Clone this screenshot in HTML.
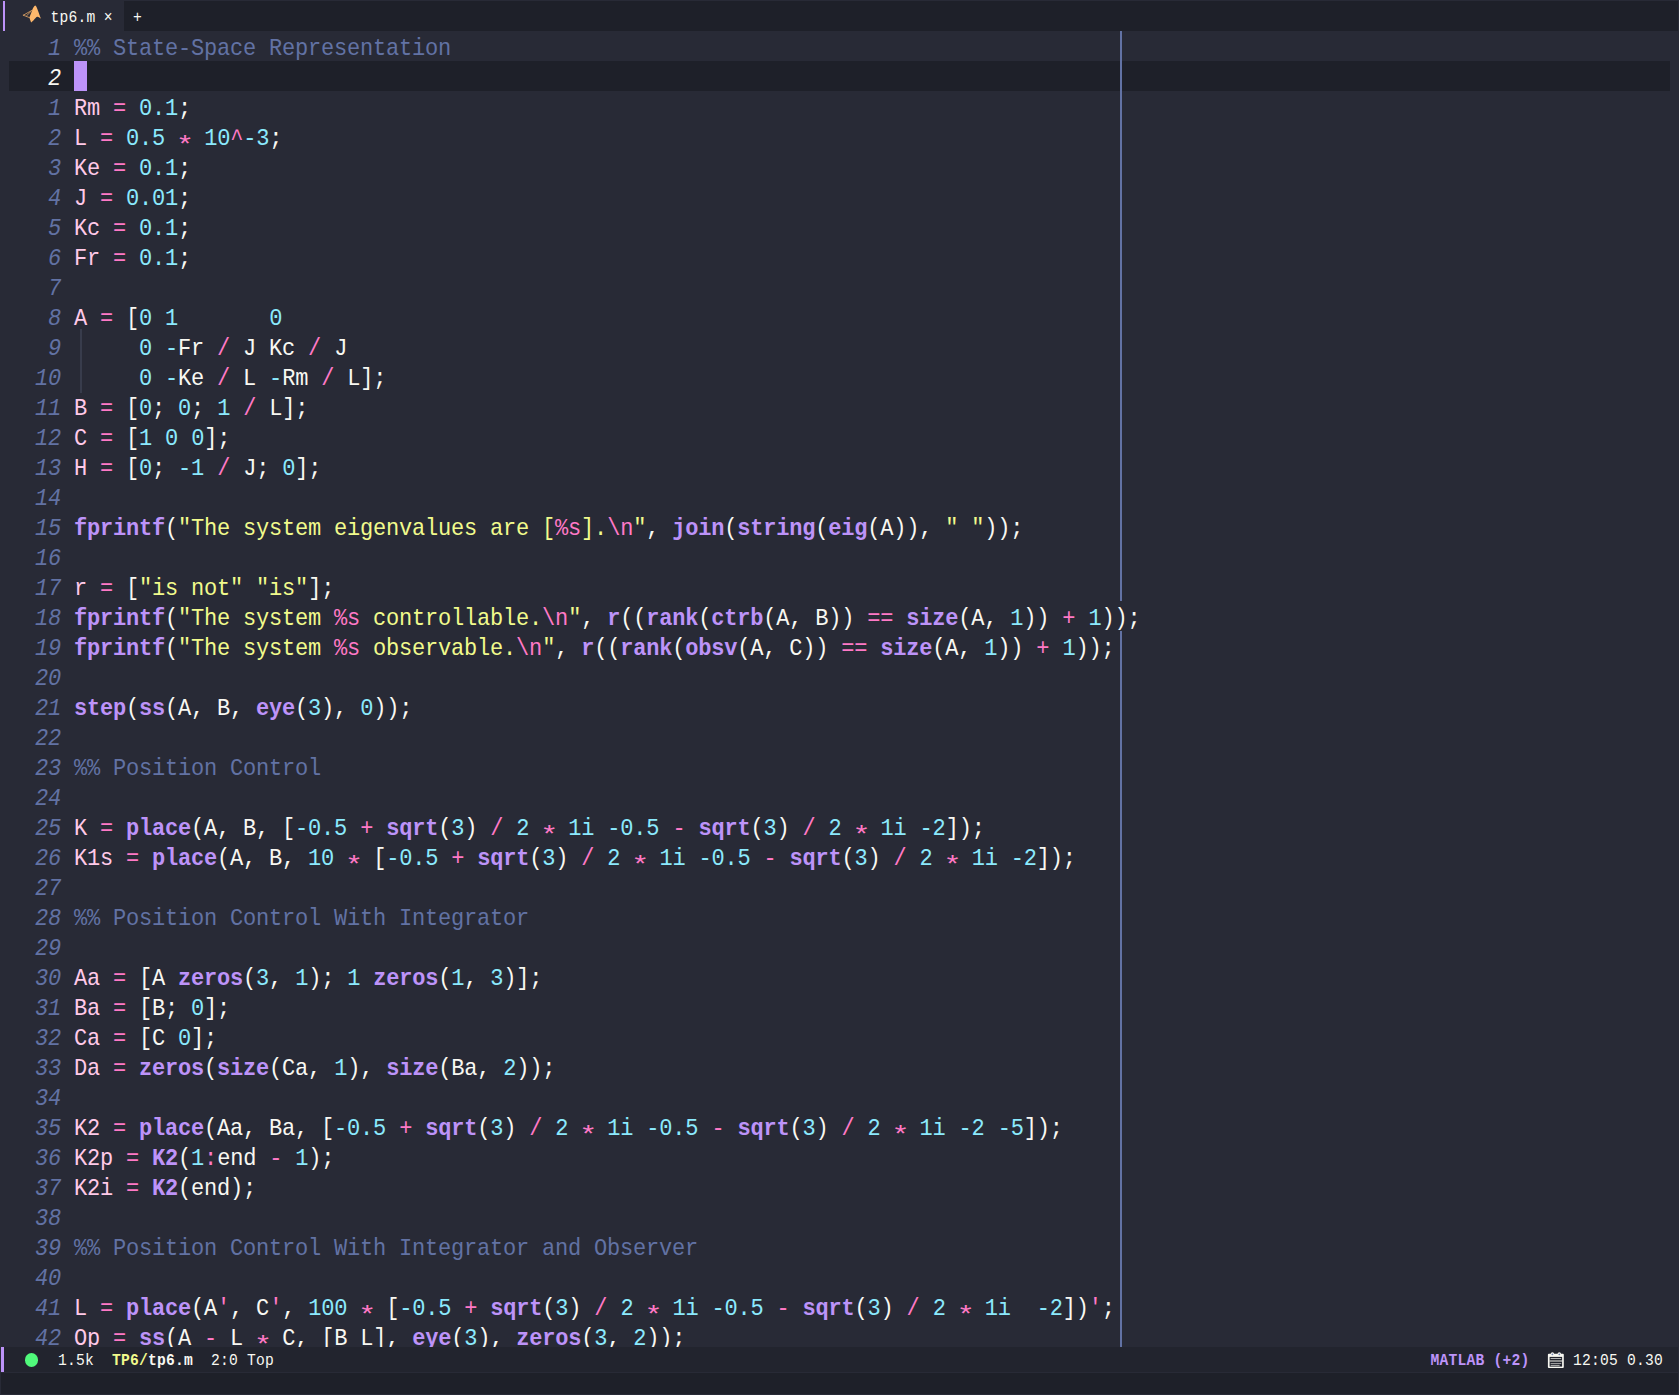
<!DOCTYPE html>
<html><head><meta charset="utf-8"><title>tp6.m</title><style>
html,body{margin:0;padding:0;background:#282a36;}
body{width:1679px;height:1395px;overflow:hidden;position:relative;font-family:"Liberation Mono",monospace;color:#f8f8f2;}
#ed{position:absolute;left:0;top:31px;width:1679px;height:1316px;overflow:hidden;}
.l{position:absolute;left:0;width:1679px;height:30px;line-height:30px;font-size:22.0px;letter-spacing:-0.200px;white-space:pre;transform-origin:0 20.87px;transform:translateY(3.6px) scaleY(1.1);}
.l .g{position:absolute;left:9px;top:0px;width:52px;text-align:right;color:#6272a4;font-style:italic;}
.l .t{position:absolute;left:74px;top:0px;}
#hl{position:absolute;left:9px;top:30px;width:1661px;height:30px;background:#1e2029;}
.l.cur .g{color:#f8f8f2;}
.c{color:#6272a4} .v{color:#ffc9e8} .o{color:#ff79c6} .n{color:#8be9fd}

.a{color:transparent;position:relative}
.a::after{content:"*";position:absolute;left:50%;top:0;width:20px;margin-left:-9.5px;text-align:center;font-size:30px;letter-spacing:0;color:#ff79c6;line-height:30px;height:30px;transform:translateY(4.5px) scaleY(.75);transform-origin:50% 50%;}
.f{color:#bd93f9;font-weight:bold} .s{color:#f1fa8c} .e{color:#ff79c6}
#cursor{position:absolute;left:74px;top:30px;width:13px;height:30px;background:#bd93f9;}
.fc{position:absolute;left:1120px;width:2px;background:#6272a4;}
#ig{position:absolute;left:79.7px;top:298px;width:2.2px;height:64px;background:#383c4c;}
#tabbar{position:absolute;left:1px;top:1px;width:1677px;height:30px;background:#1e2029;}
#tab{position:absolute;left:0;top:0;width:123px;height:30px;background:#282a36;}
#tbar{position:absolute;left:2px;top:0;width:2.4px;height:30px;background:#bd93f9;}
.tt{position:absolute;font-size:14.667px;letter-spacing:0.2px;line-height:30px;top:0;white-space:pre;transform-origin:0 18.91px;transform:translateY(2.2px) scaleY(1.1);}
#ml{position:absolute;left:1px;top:1347px;width:1677px;height:25px;background:#22242e;}
#mlbar{position:absolute;left:0;top:0;width:3px;height:25px;background:#bd93f9;}
#mini{position:absolute;left:1px;top:1373px;width:1677px;height:21px;background:#1e2029;}
.mt{position:absolute;font-size:14.667px;letter-spacing:0.2px;line-height:26px;top:0;white-space:pre;transform-origin:0 16.91px;transform:translateY(1px) scaleY(1.1);}
</style></head><body>
<div id="tabbar"><div id="tab"></div><div id="tbar"></div><svg style="position:absolute;left:-1px;top:-1.2px" width="60" height="32" viewBox="0 0 60 32"><path d="M29.4 17.6 L32.2 10.2 C33.2 7.8 34.3 5.6 35.2 5.6 C36.2 5.6 37.2 8.4 38 10.8 C39 13.6 40 16.6 41 18.8 C39.6 17.8 38.4 16.6 37.2 16.8 C35.4 17.2 33.6 21.4 31.1 22.4 C30.4 20.6 29.8 18.8 29.4 17.6 Z" fill="#ffb86c"/><path d="M23.3 15.2 L32.2 10.2 M23.3 15.2 L29.4 17.6 M26.6 15.8 L31.2 11.2" stroke="#ffb86c" stroke-width="0.7" fill="none" stroke-linecap="round"/></svg><span class="tt" style="left:49.5px">tp6.m</span><span class="tt" style="left:102.8px">×</span><span class="tt" style="left:132px">+</span></div>
<div id="ed"><div id="hl"></div>
<div class="l" style="top:0px"><span class="g">1</span><span class="t"><span class="c">%% State-Space Representation</span></span></div>
<div class="l cur" style="top:30px"><span class="g">2</span><span class="t"></span></div>
<div class="l" style="top:60px"><span class="g">1</span><span class="t"><span class="v">Rm</span> <span class="o">=</span> <span class="n">0.1</span>;</span></div>
<div class="l" style="top:90px"><span class="g">2</span><span class="t"><span class="v">L</span> <span class="o">=</span> <span class="n">0.5</span> <span class="a">*</span> <span class="n">10</span><span class="o">^</span><span class="n">-3</span>;</span></div>
<div class="l" style="top:120px"><span class="g">3</span><span class="t"><span class="v">Ke</span> <span class="o">=</span> <span class="n">0.1</span>;</span></div>
<div class="l" style="top:150px"><span class="g">4</span><span class="t"><span class="v">J</span> <span class="o">=</span> <span class="n">0.01</span>;</span></div>
<div class="l" style="top:180px"><span class="g">5</span><span class="t"><span class="v">Kc</span> <span class="o">=</span> <span class="n">0.1</span>;</span></div>
<div class="l" style="top:210px"><span class="g">6</span><span class="t"><span class="v">Fr</span> <span class="o">=</span> <span class="n">0.1</span>;</span></div>
<div class="l" style="top:240px"><span class="g">7</span><span class="t"></span></div>
<div class="l" style="top:270px"><span class="g">8</span><span class="t"><span class="v">A</span> <span class="o">=</span> [<span class="n">0</span> <span class="n">1</span>       <span class="n">0</span></span></div>
<div class="l" style="top:300px"><span class="g">9</span><span class="t">     <span class="n">0</span> <span class="n">-</span>Fr <span class="o">/</span> J Kc <span class="o">/</span> J</span></div>
<div class="l" style="top:330px"><span class="g">10</span><span class="t">     <span class="n">0</span> <span class="n">-</span>Ke <span class="o">/</span> L <span class="n">-</span>Rm <span class="o">/</span> L];</span></div>
<div class="l" style="top:360px"><span class="g">11</span><span class="t"><span class="v">B</span> <span class="o">=</span> [<span class="n">0</span>; <span class="n">0</span>; <span class="n">1</span> <span class="o">/</span> L];</span></div>
<div class="l" style="top:390px"><span class="g">12</span><span class="t"><span class="v">C</span> <span class="o">=</span> [<span class="n">1</span> <span class="n">0</span> <span class="n">0</span>];</span></div>
<div class="l" style="top:420px"><span class="g">13</span><span class="t"><span class="v">H</span> <span class="o">=</span> [<span class="n">0</span>; <span class="n">-1</span> <span class="o">/</span> J; <span class="n">0</span>];</span></div>
<div class="l" style="top:450px"><span class="g">14</span><span class="t"></span></div>
<div class="l" style="top:480px"><span class="g">15</span><span class="t"><span class="f">fprintf</span>(<span class="s">"The system eigenvalues are [</span><span class="e">%s</span><span class="s">].</span><span class="e">\n</span><span class="s">"</span>, <span class="f">join</span>(<span class="f">string</span>(<span class="f">eig</span>(A)), <span class="s">" "</span>));</span></div>
<div class="l" style="top:510px"><span class="g">16</span><span class="t"></span></div>
<div class="l" style="top:540px"><span class="g">17</span><span class="t"><span class="v">r</span> <span class="o">=</span> [<span class="s">"is not"</span> <span class="s">"is"</span>];</span></div>
<div class="l" style="top:570px"><span class="g">18</span><span class="t"><span class="f">fprintf</span>(<span class="s">"The system </span><span class="e">%s</span><span class="s"> controllable.</span><span class="e">\n</span><span class="s">"</span>, <span class="f">r</span>((<span class="f">rank</span>(<span class="f">ctrb</span>(A, B)) <span class="o">==</span> <span class="f">size</span>(A, <span class="n">1</span>)) <span class="o">+</span> <span class="n">1</span>));</span></div>
<div class="l" style="top:600px"><span class="g">19</span><span class="t"><span class="f">fprintf</span>(<span class="s">"The system </span><span class="e">%s</span><span class="s"> observable.</span><span class="e">\n</span><span class="s">"</span>, <span class="f">r</span>((<span class="f">rank</span>(<span class="f">obsv</span>(A, C)) <span class="o">==</span> <span class="f">size</span>(A, <span class="n">1</span>)) <span class="o">+</span> <span class="n">1</span>));</span></div>
<div class="l" style="top:630px"><span class="g">20</span><span class="t"></span></div>
<div class="l" style="top:660px"><span class="g">21</span><span class="t"><span class="f">step</span>(<span class="f">ss</span>(A, B, <span class="f">eye</span>(<span class="n">3</span>), <span class="n">0</span>));</span></div>
<div class="l" style="top:690px"><span class="g">22</span><span class="t"></span></div>
<div class="l" style="top:720px"><span class="g">23</span><span class="t"><span class="c">%% Position Control</span></span></div>
<div class="l" style="top:750px"><span class="g">24</span><span class="t"></span></div>
<div class="l" style="top:780px"><span class="g">25</span><span class="t"><span class="v">K</span> <span class="o">=</span> <span class="f">place</span>(A, B, [<span class="n">-0.5</span> <span class="o">+</span> <span class="f">sqrt</span>(<span class="n">3</span>) <span class="o">/</span> <span class="n">2</span> <span class="a">*</span> <span class="n">1i</span> <span class="n">-0.5</span> <span class="o">-</span> <span class="f">sqrt</span>(<span class="n">3</span>) <span class="o">/</span> <span class="n">2</span> <span class="a">*</span> <span class="n">1i</span> <span class="n">-2</span>]);</span></div>
<div class="l" style="top:810px"><span class="g">26</span><span class="t"><span class="v">K1s</span> <span class="o">=</span> <span class="f">place</span>(A, B, <span class="n">10</span> <span class="a">*</span> [<span class="n">-0.5</span> <span class="o">+</span> <span class="f">sqrt</span>(<span class="n">3</span>) <span class="o">/</span> <span class="n">2</span> <span class="a">*</span> <span class="n">1i</span> <span class="n">-0.5</span> <span class="o">-</span> <span class="f">sqrt</span>(<span class="n">3</span>) <span class="o">/</span> <span class="n">2</span> <span class="a">*</span> <span class="n">1i</span> <span class="n">-2</span>]);</span></div>
<div class="l" style="top:840px"><span class="g">27</span><span class="t"></span></div>
<div class="l" style="top:870px"><span class="g">28</span><span class="t"><span class="c">%% Position Control With Integrator</span></span></div>
<div class="l" style="top:900px"><span class="g">29</span><span class="t"></span></div>
<div class="l" style="top:930px"><span class="g">30</span><span class="t"><span class="v">Aa</span> <span class="o">=</span> [A <span class="f">zeros</span>(<span class="n">3</span>, <span class="n">1</span>); <span class="n">1</span> <span class="f">zeros</span>(<span class="n">1</span>, <span class="n">3</span>)];</span></div>
<div class="l" style="top:960px"><span class="g">31</span><span class="t"><span class="v">Ba</span> <span class="o">=</span> [B; <span class="n">0</span>];</span></div>
<div class="l" style="top:990px"><span class="g">32</span><span class="t"><span class="v">Ca</span> <span class="o">=</span> [C <span class="n">0</span>];</span></div>
<div class="l" style="top:1020px"><span class="g">33</span><span class="t"><span class="v">Da</span> <span class="o">=</span> <span class="f">zeros</span>(<span class="f">size</span>(Ca, <span class="n">1</span>), <span class="f">size</span>(Ba, <span class="n">2</span>));</span></div>
<div class="l" style="top:1050px"><span class="g">34</span><span class="t"></span></div>
<div class="l" style="top:1080px"><span class="g">35</span><span class="t"><span class="v">K2</span> <span class="o">=</span> <span class="f">place</span>(Aa, Ba, [<span class="n">-0.5</span> <span class="o">+</span> <span class="f">sqrt</span>(<span class="n">3</span>) <span class="o">/</span> <span class="n">2</span> <span class="a">*</span> <span class="n">1i</span> <span class="n">-0.5</span> <span class="o">-</span> <span class="f">sqrt</span>(<span class="n">3</span>) <span class="o">/</span> <span class="n">2</span> <span class="a">*</span> <span class="n">1i</span> <span class="n">-2</span> <span class="n">-5</span>]);</span></div>
<div class="l" style="top:1110px"><span class="g">36</span><span class="t"><span class="v">K2p</span> <span class="o">=</span> <span class="f">K2</span>(<span class="n">1</span><span class="o">:</span>end <span class="o">-</span> <span class="n">1</span>);</span></div>
<div class="l" style="top:1140px"><span class="g">37</span><span class="t"><span class="v">K2i</span> <span class="o">=</span> <span class="f">K2</span>(end);</span></div>
<div class="l" style="top:1170px"><span class="g">38</span><span class="t"></span></div>
<div class="l" style="top:1200px"><span class="g">39</span><span class="t"><span class="c">%% Position Control With Integrator and Observer</span></span></div>
<div class="l" style="top:1230px"><span class="g">40</span><span class="t"></span></div>
<div class="l" style="top:1260px"><span class="g">41</span><span class="t"><span class="v">L</span> <span class="o">=</span> <span class="f">place</span>(A<span class="o">'</span>, C<span class="o">'</span>, <span class="n">100</span> <span class="a">*</span> [<span class="n">-0.5</span> <span class="o">+</span> <span class="f">sqrt</span>(<span class="n">3</span>) <span class="o">/</span> <span class="n">2</span> <span class="a">*</span> <span class="n">1i</span> <span class="n">-0.5</span> <span class="o">-</span> <span class="f">sqrt</span>(<span class="n">3</span>) <span class="o">/</span> <span class="n">2</span> <span class="a">*</span> <span class="n">1i</span>  <span class="n">-2</span>])<span class="o">'</span>;</span></div>
<div class="l" style="top:1290px"><span class="g">42</span><span class="t"><span class="v">Op</span> <span class="o">=</span> <span class="f">ss</span>(A <span class="o">-</span> L <span class="a">*</span> C, [B L], <span class="f">eye</span>(<span class="n">3</span>), <span class="f">zeros</span>(<span class="n">3</span>, <span class="n">2</span>));</span></div>
<div class="fc" style="top:0px;height:570px"></div>
<div class="fc" style="top:600px;height:720px"></div>
<div id="ig"></div><div id="cursor"></div></div>
<div id="ml"><div id="mlbar"></div><div style="position:absolute;left:24px;top:6.4px;width:13.2px;height:13.2px;border-radius:50%;background:#50fa7b"></div><span class="mt" style="left:57px">1.5k</span><span class="mt" style="left:111px;color:#f1fa8c;font-weight:bold">TP6/</span><span class="mt" style="left:147px;font-weight:bold">tp6.m</span><span class="mt" style="left:210px">2:0 Top</span><span class="mt" style="left:1429.5px;color:#bd93f9;font-weight:bold">MATLAB (+2)</span><svg style="position:absolute;left:1545px;top:4px" width="20" height="20" viewBox="0 0 20 20"><rect x="1.9" y="2.8" width="15.9" height="14.3" rx="1" fill="#f8f8f2"/><rect x="3.6" y="5.9" width="12.5" height="9.7" fill="#22242e"/><rect x="4.6" y="7" width="10.6" height="0.9" fill="#f8f8f2" opacity=".75"/><rect x="3.6" y="9.2" width="12.5" height="1.6" fill="#f8f8f2" opacity=".6"/><rect x="4.6" y="12" width="10.6" height="0.8" fill="#f8f8f2" opacity=".7"/><rect x="4.6" y="13.9" width="9" height="0.9" fill="#f8f8f2" opacity=".75"/><circle cx="6.4" cy="3" r="1.7" fill="#f8f8f2"/><circle cx="13.3" cy="3" r="1.7" fill="#f8f8f2"/><circle cx="6.4" cy="3.3" r="0.9" fill="#7080b0"/><circle cx="13.3" cy="3.3" r="0.9" fill="#7080b0"/></svg><span class="mt" style="left:1572px">12:05 0.30</span></div>
<div id="mini"></div>
</body></html>
